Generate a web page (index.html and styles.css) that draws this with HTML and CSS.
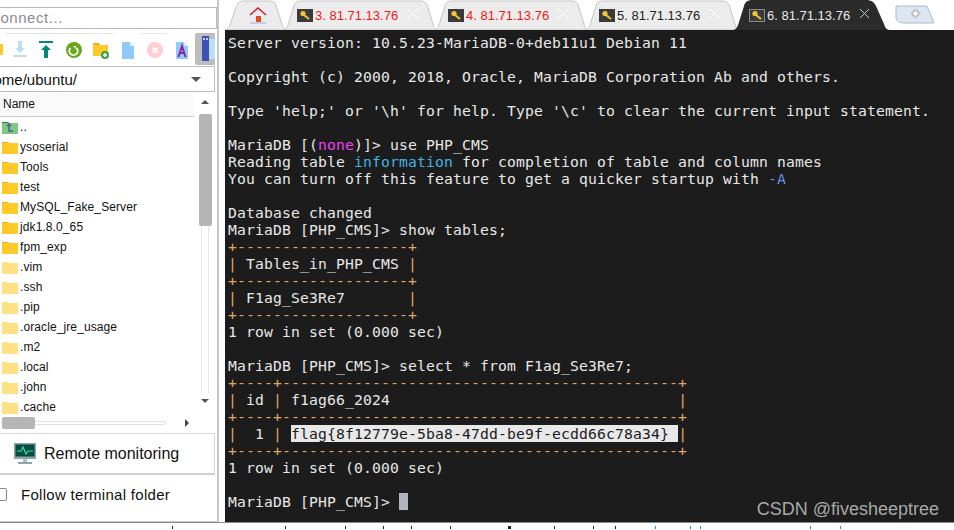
FILE: index.html
```html
<!DOCTYPE html>
<html lang="en">
<head>
<meta charset="utf-8">
<title>MobaXterm session</title>
<link rel="stylesheet" href="styles.css">
</head>
<body>
<div class="app">
  <div class="main">
    <aside class="side">
      <div class="connect"><span>Connect...</span></div>
      <div class="toolbar">
        <svg class="tool" width="4" height="20" viewBox="0 0 4 20"><rect x="-8" y="4" width="11" height="11" fill="#ffca28"/></svg>
        <svg class="tool" width="16" height="20" viewBox="0 0 16 20"><path d="M6 1h4v7h3l-5 5-5-5h3z" fill="#bbdefb"/><rect x="1" y="15" width="14" height="2" fill="#bbdefb"/></svg>
        <svg class="tool" width="16" height="20" viewBox="0 0 16 20"><rect x="1" y="1" width="14" height="2" fill="#00897b"/><path d="M8 5l5 5h-3v8H6v-8H3z" fill="#00897b"/></svg>
        <svg class="tool" width="18" height="20" viewBox="0 0 18 20"><circle cx="9" cy="10" r="8" fill="#6aa61e"/><path d="M5.5 8a4.2 4.2 0 1 0 6 0" fill="none" stroke="#fff" stroke-width="1.8"/><path d="M8 6h3v3z" fill="#fff"/></svg>
        <svg class="tool" width="18" height="20" viewBox="0 0 18 20"><path d="M1 3h6l1 2h8v11H1z" fill="#ffca28"/><path d="M1 3h6l1 2H1z" fill="#f9a825"/><circle cx="13" cy="15" r="4" fill="#43a047"/><path d="M11 15h4M13 13v4" stroke="#fff" stroke-width="1.4"/></svg>
        <svg class="tool" width="14" height="20" viewBox="0 0 14 20"><path d="M1 2h8l4 4v13H1z" fill="#90caf9"/><path d="M9 2l4 4H9z" fill="#e3f2fd"/></svg>
        <svg class="tool" width="18" height="20" viewBox="0 0 18 20"><circle cx="9" cy="10" r="8" fill="#ffcdd2"/><path d="M6.5 7.5l5 5M11.5 7.5l-5 5" stroke="#fff" stroke-width="2"/></svg>
        <svg class="tool" width="14" height="20" viewBox="0 0 14 20"><path d="M1 2h8l4 4v13H1z" fill="#90caf9"/><path d="M9 2l4 4H9z" fill="#e3f2fd"/><path d="M3.5 17L7 6l3.5 11M5 13h4" fill="none" stroke="#8e24aa" stroke-width="2"/></svg>
        <div class="tool-active"><svg width="13" height="25" viewBox="0 0 13 25"><rect x="0" y="0" width="7" height="25" fill="#3f51b5"/><rect x="7" y="3" width="6" height="20" fill="#bbdefb"/><rect x="1" y="2" width="2" height="2" fill="#c5cae9"/><rect x="4" y="2" width="2" height="2" fill="#c5cae9"/></svg></div>
      </div>
      <div class="path"><span class="path-text">/home/ubuntu/</span><i class="arrow down"></i></div>
      <div class="files">
        <div class="list">
          <div class="head"><span>Name</span></div>
          <div class="row"><svg class="fold" viewBox="0 0 16 13"><path d="M0 1h6l1 1h9v11H0z" fill="#81c784"/><path d="M0 1h6l1 1H0z" fill="#2e7d32"/><path d="M7 3v7h4M5 5l2-2 2 2" fill="none" stroke="#4a5a9a" stroke-width="1.4"/></svg><span>..</span></div>
          <div class="row"><svg class="fold" viewBox="0 0 16 13"><path d="M0 1h6l1 1h9v11H0z" fill="#ffca28"/><path d="M0 1h6l1 1H0z" fill="#f9a825"/></svg><span>ysoserial</span></div>
          <div class="row"><svg class="fold" viewBox="0 0 16 13"><path d="M0 1h6l1 1h9v11H0z" fill="#ffca28"/><path d="M0 1h6l1 1H0z" fill="#f9a825"/></svg><span>Tools</span></div>
          <div class="row"><svg class="fold" viewBox="0 0 16 13"><path d="M0 1h6l1 1h9v11H0z" fill="#ffca28"/><path d="M0 1h6l1 1H0z" fill="#f9a825"/></svg><span>test</span></div>
          <div class="row"><svg class="fold" viewBox="0 0 16 13"><path d="M0 1h6l1 1h9v11H0z" fill="#ffca28"/><path d="M0 1h6l1 1H0z" fill="#f9a825"/></svg><span>MySQL_Fake_Server</span></div>
          <div class="row"><svg class="fold" viewBox="0 0 16 13"><path d="M0 1h6l1 1h9v11H0z" fill="#ffca28"/><path d="M0 1h6l1 1H0z" fill="#f9a825"/></svg><span>jdk1.8.0_65</span></div>
          <div class="row"><svg class="fold" viewBox="0 0 16 13"><path d="M0 1h6l1 1h9v11H0z" fill="#ffca28"/><path d="M0 1h6l1 1H0z" fill="#f9a825"/></svg><span>fpm_exp</span></div>
          <div class="row"><svg class="fold" viewBox="0 0 16 13"><path d="M0 1h6l1 1h9v11H0z" fill="#ffe082"/></svg><span>.vim</span></div>
          <div class="row"><svg class="fold" viewBox="0 0 16 13"><path d="M0 1h6l1 1h9v11H0z" fill="#ffe082"/></svg><span>.ssh</span></div>
          <div class="row"><svg class="fold" viewBox="0 0 16 13"><path d="M0 1h6l1 1h9v11H0z" fill="#ffe082"/></svg><span>.pip</span></div>
          <div class="row"><svg class="fold" viewBox="0 0 16 13"><path d="M0 1h6l1 1h9v11H0z" fill="#ffe082"/></svg><span>.oracle_jre_usage</span></div>
          <div class="row"><svg class="fold" viewBox="0 0 16 13"><path d="M0 1h6l1 1h9v11H0z" fill="#ffe082"/></svg><span>.m2</span></div>
          <div class="row"><svg class="fold" viewBox="0 0 16 13"><path d="M0 1h6l1 1h9v11H0z" fill="#ffe082"/></svg><span>.local</span></div>
          <div class="row"><svg class="fold" viewBox="0 0 16 13"><path d="M0 1h6l1 1h9v11H0z" fill="#ffe082"/></svg><span>.john</span></div>
          <div class="row"><svg class="fold" viewBox="0 0 16 13"><path d="M0 1h6l1 1h9v11H0z" fill="#ffe082"/></svg><span>.cache</span></div>
        </div>
        <div class="vbar">
          <i class="arrow up"></i>
          <div class="vtrack"><div class="vthumb"></div></div>
          <i class="arrow down small"></i>
        </div>
      </div>
      <div class="hbar"><div class="htrack"><div class="hthumb"></div></div><i class="arrow right"></i></div>
      <div class="monitor">
        <svg width="22" height="21" viewBox="0 0 22 21"><rect x="0" y="0" width="22" height="16" fill="#90a4ae"/><rect x="1.5" y="1.5" width="19" height="12" fill="#004d40"/><path d="M3 8h4l2-4 3 7 2-3h5" fill="none" stroke="#2ee6a6" stroke-width="1.2"/><rect x="9" y="16" width="4" height="3" fill="#b0bec5"/><rect x="4" y="19" width="14" height="2" fill="#90a4ae"/></svg>
        <span>Remote monitoring</span>
      </div>
      <label class="follow"><i class="check"></i><span>Follow terminal folder</span></label>
    </aside>
    <section class="right">
      <div class="tabs">
        <div class="tab home">
          <svg class="tabshape" viewBox="0 0 65 30" preserveAspectRatio="none"><path d="M0 30C3 30 5 26 6 22L11 7C13 2 15 1 19 1H44C48 1 50 2 51 6L57 24C58 28 60 30 65 30Z" fill="#ececec" stroke="#c4c4c4"/></svg>
          <svg class="homeicon" width="18" height="17" viewBox="0 0 18 17"><path d="M1 8L9 1l8 7" fill="none" stroke="#c62828" stroke-width="1.6"/><path d="M3 8l6-5 6 5v8H3z" fill="#e8eaf6"/><rect x="7" y="9" width="5" height="8" fill="#e64a19"/><rect x="1" y="15" width="16" height="2" fill="#c5cae9"/></svg>
        </div>
        <div class="tab">
          <svg class="tabshape" viewBox="0 0 155 30" preserveAspectRatio="none"><path d="M0 30C3 30 5 26 6 22L11 6C12 2 14 1 18 1H137C141 1 143 2 144.5 6L150 24C151 28 152 30 155 30Z" fill="#ececec" stroke="#c4c4c4"/></svg>
          <svg class="key" width="16" height="13" viewBox="0 0 16 13"><rect width="16" height="13" fill="#3a3a3a"/><circle cx="6" cy="4.5" r="2.6" fill="#f4c430"/><path d="M7 6l5 4" stroke="#f4c430" stroke-width="2"/></svg>
          <span class="tab-label red">3. 81.71.13.76</span><svg class="close" width="11" height="11" viewBox="0 0 11 11"><path d="M1 1l9 9M10 1l-9 9" stroke="#fff" stroke-width="1"/></svg>
        </div>
        <div class="tab">
          <svg class="tabshape" viewBox="0 0 155 30" preserveAspectRatio="none"><path d="M0 30C3 30 5 26 6 22L11 6C12 2 14 1 18 1H137C141 1 143 2 144.5 6L150 24C151 28 152 30 155 30Z" fill="#ececec" stroke="#c4c4c4"/></svg>
          <svg class="key" width="16" height="13" viewBox="0 0 16 13"><rect width="16" height="13" fill="#3a3a3a"/><circle cx="6" cy="4.5" r="2.6" fill="#f4c430"/><path d="M7 6l5 4" stroke="#f4c430" stroke-width="2"/></svg>
          <span class="tab-label red">4. 81.71.13.76</span><svg class="close" width="11" height="11" viewBox="0 0 11 11"><path d="M1 1l9 9M10 1l-9 9" stroke="#fff" stroke-width="1"/></svg>
        </div>
        <div class="tab">
          <svg class="tabshape" viewBox="0 0 155 30" preserveAspectRatio="none"><path d="M0 30C3 30 5 26 6 22L11 6C12 2 14 1 18 1H137C141 1 143 2 144.5 6L150 24C151 28 152 30 155 30Z" fill="#ececec" stroke="#c4c4c4"/></svg>
          <svg class="key" width="16" height="13" viewBox="0 0 16 13"><rect width="16" height="13" fill="#3a3a3a"/><circle cx="6" cy="4.5" r="2.6" fill="#f4c430"/><path d="M7 6l5 4" stroke="#f4c430" stroke-width="2"/></svg>
          <span class="tab-label">5. 81.71.13.76</span><svg class="close" width="11" height="11" viewBox="0 0 11 11"><path d="M1 1l9 9M10 1l-9 9" stroke="#fff" stroke-width="1"/></svg>
        </div>
        <div class="tab active">
          <svg class="tabshape" viewBox="0 0 157 30" preserveAspectRatio="none"><path d="M0 30C3 30 5 26 6 22L11 6C12 2 15 0 19 0H133C138 0 141 2 143 6L151 24C152 28 154 30 157 30Z" fill="#2b2b2b"/></svg>
          <svg class="key" width="16" height="13" viewBox="0 0 16 13"><rect x=".5" y=".5" width="15" height="12" fill="#3a3a3a" stroke="#8a8a8a"/><circle cx="6" cy="4.5" r="2.6" fill="#f4c430"/><path d="M7 6l5 4" stroke="#f4c430" stroke-width="2"/></svg>
          <span class="tab-label light">6. 81.71.13.76</span><svg class="close" width="11" height="11" viewBox="0 0 11 11"><path d="M1 1l9 9M10 1l-9 9" stroke="#c8c8c8" stroke-width="1"/></svg>
        </div>
        <div class="newtab"><svg width="40" height="19" viewBox="0 0 40 19"><path d="M1 1H32L39 18H9C5 18 1 16 1 12Z" fill="#dde6f0" stroke="#a9bccf"/><path d="M17 7h2V5h3v2h2v3h-2v2h-3v-2h-2z" fill="#f5f5f5" stroke="#9a9a9a" stroke-width=".8"/></svg></div>
      </div>
      <pre class="term">Server version: 10.5.23-MariaDB-0+deb11u1 Debian 11

Copyright (c) 2000, 2018, Oracle, MariaDB Corporation Ab and others.

Type 'help;' or '\h' for help. Type '\c' to clear the current input statement.

MariaDB [(<span class="magenta">none</span>)]&gt; use PHP_CMS
Reading table <span class="cyan">information</span> for completion of table and column names
You can turn off this feature to get a quicker startup with <span class="blue">-A</span>

Database changed
MariaDB [PHP_CMS]&gt; show tables;
<span class="bd">+-------------------+</span>
<span class="bd">|</span> Tables_in_PHP_CMS <span class="bd">|</span>
<span class="bd">+-------------------+</span>
<span class="bd">|</span> F1ag_Se3Re7       <span class="bd">|</span>
<span class="bd">+-------------------+</span>
1 row in set (0.000 sec)

MariaDB [PHP_CMS]&gt; select * from F1ag_Se3Re7;
<span class="bd">+----+--------------------------------------------+</span>
<span class="bd">|</span> id <span class="bd">|</span> f1ag66_2024                                <span class="bd">|</span>
<span class="bd">+----+--------------------------------------------+</span>
<span class="bd">|</span>  1 <span class="bd">|</span> <span class="sel">flag{8f12779e-5ba8-47dd-be9f-ecdd66c78a34} </span><span class="bd">|</span>
<span class="bd">+----+--------------------------------------------+</span>
1 row in set (0.000 sec)

MariaDB [PHP_CMS]&gt; <span class="cursor"> </span></pre>
      <div class="mark">CSDN @fivesheeptree</div>
    </section>
  </div>
  <svg class="clipped" width="954" height="6" viewBox="0 0 954 6"><path d="M172 3h1v3h-1zM285 3h1v3h-1zM345 3h1v3h-1zM383 3h1v3h-1zM411 3h1v3h-1zM450 3h1v3h-1zM508 3h3v3h-3zM554 3h1v3h-1zM593 3h1v3h-1zM615 3h1v3h-1z" fill="#222"/><path d="M655 3h1v3h-1zM690 3h1v3h-1zM700 3h1v3h-1zM810 3h1v3h-1zM840 3h1v3h-1z" fill="#2a8fd0"/></svg>
</div>
</body>
</html>
```

FILE: styles.css
```css
* { box-sizing: border-box; }
html, body { margin: 0; padding: 0; background: #fff; }
body { width: 954px; height: 530px; overflow: hidden; font-family: "Liberation Sans", Arial, sans-serif; color: #111; }
.app { width: 954px; height: 530px; overflow: hidden; }
.main { display: flex; height: 523px; border-bottom: 1px solid #8a8a8a; }
.clipped { display: block; }

.side { width: 219px; flex: none; display: flex; flex-direction: column; padding-top: 7px; border-right: 2px solid #c8c8c8; border-bottom: 1px solid #c8c8c8; overflow: hidden; position: relative; }
.connect { height: 22px; margin-left: -12px; width: 229px; border: 1px solid #bdbdbd; font-size: 15px; line-height: 20px; color: #8c8c8c; letter-spacing: .55px; flex: none; }
.connect span { margin-left: 0; }
.toolbar { display: flex; align-items: center; height: 37px; flex: none; padding-top: 4px; background: linear-gradient(#e4e4e4, #e4e4e4) 6px 4px / 107px 1px no-repeat, linear-gradient(#e8e8e8, #e8e8e8) 140px 4px / 27px 1px no-repeat; }
.tool { flex: none; margin-right: 11px; }
.tool:nth-child(1) { margin-right: 8px; }
.tool:nth-child(2) { margin-right: 10px; }
.tool:nth-child(4) { margin-right: 9px; }
.tool:nth-child(8) { margin-right: 6px; }
.tool-active { width: 20px; height: 32px; background: #bdbdbd; padding: 3px 0 0 7px; overflow: hidden; flex: none; border-radius: 2px 0 0 2px; margin-top: -2px; }
.path { height: 26px; width: 215px; border: 1px solid #bdbdbd; border-left: 0; display: flex; align-items: center; justify-content: space-between; padding-right: 13px; flex: none; overflow: hidden; font-size: 15px; }
.path-text { margin-left: -19px; }
.arrow { display: block; width: 0; height: 0; flex: none; }
.arrow.down { border-left: 5px solid transparent; border-right: 5px solid transparent; border-top: 5px solid #555; }
.arrow.up { border-left: 4px solid transparent; border-right: 4px solid transparent; border-bottom: 4px solid #555; }
.arrow.right { border-top: 4px solid transparent; border-bottom: 4px solid transparent; border-left: 4px solid #444; }
.arrow.small { border-left-width: 4px; border-right-width: 4px; border-top-width: 4px; }

.files { display: flex; height: 329px; flex: none; overflow: hidden; }
.list { width: 194px; flex: none; overflow: hidden; }
.head { height: 25px; border-bottom: 1px solid #c8c8c8; background: #fafafa; font-size: 12px; line-height: 24px; padding-left: 3px; }
.row { display: flex; align-items: center; height: 20px; font-size: 12px; letter-spacing: .1px; color: #111; gap: 2px; padding-left: 2px; white-space: nowrap; }
.fold { width: 16px; height: 13px; flex: none; }
.vbar { width: 17px; margin-left: 2px; margin-right: 0; display: flex; flex-direction: column; align-items: center; flex: none; padding-top: 8px; }
.vtrack { flex: 1; width: 8px; margin: 10px 0 6px; border-left: 1px solid #e6e6e6; border-right: 1px solid #e6e6e6; position: relative; }
.vthumb { position: absolute; left: -3px; top: 0; width: 13px; height: 112px; background: #b5b5b5; border-radius: 2px; }
.vbar .small { margin-bottom: 18px; }
.hbar { height: 12px; display: flex; align-items: center; flex: none; margin-top: -4px; gap: 13px; }
.htrack { width: 165px; height: 4px; border: 1px solid #e0e0e0; border-radius: 2px; position: relative; margin-left: 1px; }
.hthumb { position: absolute; left: 0; top: -5px; width: 33px; height: 12px; background: #b5b5b5; border-radius: 2px; }
.monitor { height: 42px; width: 215px; margin-top: 4px; border: 1px solid #d8d8d8; border-bottom: 2px solid #d0d0d0; border-left: 0; display: flex; align-items: center; gap: 8px; padding-left: 14px; font-size: 16px; color: #111; flex: none; }
.follow { display: flex; align-items: center; gap: 14px; margin-top: 11px; font-size: 15px; letter-spacing: .3px; color: #111; }
.check { width: 12px; height: 13px; margin-left: -5px; border: 1px solid #888; border-radius: 2px; background: #fff; display: block; }

.right { flex: 1; min-width: 0; display: flex; flex-direction: column; margin-left: 6px; position: relative; }
.tabs { height: 30px; display: flex; flex: none; background: #fff; }
.tab { position: relative; width: 155px; height: 30px; margin-left: -4px; display: flex; align-items: center; padding-left: 14px; flex: none; }
.tab.home { width: 65px; margin-left: 0; padding-left: 24px; }
.home + .tab { margin-left: -7px; }
.tab.active { width: 157px; margin-left: -7px; padding-left: 16px; }
.tabshape { position: absolute; left: 0; top: 0; width: 100%; height: 100%; }
.homeicon, .key, .tab-label, .close { position: relative; }
.key { flex: none; margin-right: 2px; }
.tab-label { font-size: 13px; white-space: nowrap; color: #222; width: 85px; }
.tab-label.red { color: #f01818; }
.tab-label.light { color: #e8e8e8; }
.close { flex: none; margin-left: 7px; margin-top: -4px; }
.newtab { margin-left: 5px; margin-top: 5px; flex: none; height: 19px; }

.term { flex: 1; margin: 0; background: #1c1c1c; color: #e8e8e8; padding: 4px 0 0 3px; font-family: "DejaVu Sans Mono", monospace; font-size: 14.72px; letter-spacing: .14px; line-height: 17px; overflow: hidden; }
.magenta { color: #f040f0; }
.cyan { color: #3fb4e0; }
.blue { color: #6a8fe0; }
.bd { color: #e0a860; }
.sel { background: #e8e8e8; color: #1c1c1c; }
.cursor { background: #b4b4c0; }
.mark { position: absolute; right: 15px; bottom: 2px; font-size: 18px; color: #a8a8a8; }
```
